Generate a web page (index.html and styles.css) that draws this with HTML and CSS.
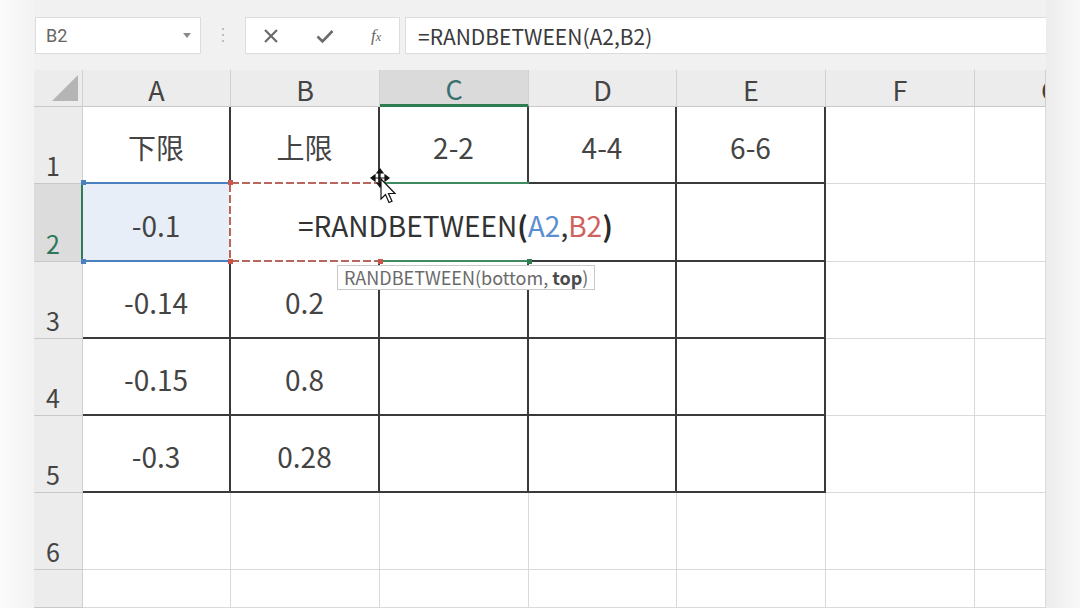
FILE: index.html
```html
<!DOCTYPE html>
<html lang="zh-CN">
<head>
    <meta charset="UTF-8">
    <title>RANDBETWEEN</title>
    <link rel="stylesheet" href="styles.css">
</head>
<body>
    <div class="screen">
        <div class="side side-left"></div>

        <div class="excel">
            <!-- name box + formula bar -->
            <div class="toolbar">
                <div class="namebox">
                    <span>B2</span>
                    <svg class="caret" width="8" height="5" viewBox="0 0 8 5"><path d="M0 0h8L4 5z" fill="#8a8a8a"/></svg>
                </div>
                <div class="grip"><i></i><i></i><i></i></div>
                <div class="fxbox">
                    <svg width="16" height="16" viewBox="0 0 16 16"><path d="M2 2l12 12M14 2L2 14" stroke="#6b6b6b" stroke-width="2.2" fill="none"/></svg>
                    <svg width="18" height="16" viewBox="0 0 18 16"><path d="M1.5 8.5l5 5L16.5 3" stroke="#6b6b6b" stroke-width="2.6" fill="none"/></svg>
                    <span class="fx">f<small>x</small></span>
                </div>
                <div class="formula">=RANDBETWEEN(A2,B2)</div>
            </div>

            <div class="sheet">
                <!-- column headers -->
                <div class="corner"><svg width="26" height="26" viewBox="0 0 26 26"><path d="M26 0V26H0z" fill="#b5b5b5"/></svg></div>
                <div class="colhead">A</div>
                <div class="colhead">B</div>
                <div class="colhead sel">C</div>
                <div class="colhead">D</div>
                <div class="colhead">E</div>
                <div class="colhead">F</div>
                <div class="colhead cut">G</div>

                <!-- row 1 -->
                <div class="rowhead">1</div>
                <div class="cell dark">下限</div>
                <div class="cell dark">上限</div>
                <div class="cell dark">2-2</div>
                <div class="cell dark">4-4</div>
                <div class="cell dark">6-6</div>
                <div class="cell"></div>
                <div class="cell"></div>

                <!-- row 2: A2 referenced, formula being typed -->
                <div class="rowhead sel">2</div>
                <div class="cell dark ref-a">
                    -0.1
                    <span class="mark-blue"></span>
                    <span class="handle blue h-tl"></span>
                    <span class="handle blue h-bl"></span>
                </div>
                <div class="cell dark editing">
                    <span class="edit-text">=RANDBETWEEN<b>(</b><em class="a">A2</em>,<em class="b">B2</em><b>)</b></span>
                    <span class="dash dash-top"></span>
                    <span class="dash dash-left"></span>
                    <span class="dash dash-bottom"></span>
                    <span class="green-line g-top"></span>
                    <span class="green-line g-bottom"></span>
                    <span class="handle red r-tl"></span>
                    <span class="handle red r-bl"></span>
                    <span class="handle red r-br"></span>
                    <span class="handle green g-br"></span>
                    <div class="tip">RANDBETWEEN(bottom, <strong>top</strong>)</div>
                    <svg class="pointer" width="30" height="40" viewBox="0 0 30 40">
                        <path d="M10 1l-3 4h6zM10 19l-3-4h6zM1 10l4-3v6zM19 10l-4-3v6zM10 4v12M4 10h12" stroke="#111" stroke-width="1.2" fill="#111"/>
                        <path d="M11 11v20l4.5-4.5 3.5 8 3-1.3-3.5-7.7h6.5z" fill="#fff" stroke="#111" stroke-width="1.2"/>
                    </svg>
                </div>
                <div class="cell dark"></div>
                <div class="cell"></div>
                <div class="cell"></div>

                <!-- row 3 -->
                <div class="rowhead">3</div>
                <div class="cell dark">-0.14</div>
                <div class="cell dark">0.2</div>
                <div class="cell dark"></div>
                <div class="cell dark"></div>
                <div class="cell dark"></div>
                <div class="cell"></div>
                <div class="cell"></div>

                <!-- row 4 -->
                <div class="rowhead">4</div>
                <div class="cell dark">-0.15</div>
                <div class="cell dark">0.8</div>
                <div class="cell dark"></div>
                <div class="cell dark"></div>
                <div class="cell dark"></div>
                <div class="cell"></div>
                <div class="cell"></div>

                <!-- row 5 -->
                <div class="rowhead">5</div>
                <div class="cell dark">-0.3</div>
                <div class="cell dark">0.28</div>
                <div class="cell dark"></div>
                <div class="cell dark"></div>
                <div class="cell dark"></div>
                <div class="cell"></div>
                <div class="cell"></div>

                <!-- row 6 -->
                <div class="rowhead">6</div>
                <div class="cell"></div>
                <div class="cell"></div>
                <div class="cell"></div>
                <div class="cell"></div>
                <div class="cell"></div>
                <div class="cell"></div>
                <div class="cell"></div>

                <!-- row 7, only its top shows -->
                <div class="rowhead"></div>
                <div class="cell"></div>
                <div class="cell"></div>
                <div class="cell"></div>
                <div class="cell"></div>
                <div class="cell"></div>
                <div class="cell"></div>
                <div class="cell"></div>
            </div>
        </div>

        <div class="side side-right"></div>
    </div>
</body>
</html>
```

FILE: styles.css
```css
body {
    margin: 0;
    font-family: "Noto Sans CJK SC", "Noto Sans", sans-serif;
    color: #333;
    overflow: hidden;
}
.screen {
    display: flex;
    width: 1080px;
    height: 608px;
    overflow: hidden;
}
.side {
    width: 34px;
    flex: none;
}
.side-left {
    background: linear-gradient(90deg, #fbfbfb, #f3f3f3);
}
.side-right {
    background: linear-gradient(90deg, #ececec, #f8f8f8);
}
.excel {
    width: 1012px;
    flex: none;
    overflow: hidden;
    background: #fff;
}

/* ---- formula bar ---- */
.toolbar {
    height: 70px;
    box-sizing: border-box;
    padding-top: 17px;
    background: #f1f1f1;
    display: flex;
    align-items: flex-start;
}
.namebox, .fxbox, .formula {
    height: 37px;
    box-sizing: border-box;
    background: #fff;
    border: 1px solid #dcdcdc;
    display: flex;
    align-items: center;
}
.namebox {
    width: 166px;
    margin-left: 1px;
    padding: 0 9px 0 10px;
    justify-content: space-between;
    font-family: "Roboto", "Liberation Sans", sans-serif;
    font-size: 18px;
    color: #666;
}
.grip {
    width: 44px;
    display: flex;
    flex-direction: column;
    align-items: center;
    gap: 4px;
    padding-top: 11px;
}
.grip i {
    width: 2px;
    height: 2px;
    background: #bdbdbd;
}
.fxbox {
    width: 155px;
    padding: 0 18px 0 17px;
    justify-content: space-between;
}
.fx {
    font-family: "Liberation Serif", serif;
    font-style: italic;
    font-size: 17px;
    color: #666;
}
.fx small {
    font-size: 12px;
}
.formula {
    flex: 1;
    margin-left: 5px;
    border-right: none;
    padding-left: 12px;
    font-size: 21px;
    color: #3a3a3a;
}

/* ---- sheet grid ---- */
.sheet {
    display: grid;
    grid-template-columns: 49px 148px 149px 149px 148px 149px 149px 71px;
    grid-template-rows: 37px 77px 78px 77px 77px 77px 77px 38px;
}
.corner, .colhead, .rowhead {
    background: #ececec;
    box-sizing: border-box;
    border-right: 1px solid #d0d0d0;
    border-bottom: 1px solid #c8c8c8;
    color: #444;
}
.corner {
    display: flex;
    align-items: flex-end;
    justify-content: flex-end;
    padding: 0 4px 5px 0;
}
.colhead {
    display: flex;
    align-items: center;
    justify-content: center;
    font-size: 27px;
    padding-top: 2px;
    white-space: nowrap;
    overflow: hidden;
}
.colhead.cut {
    justify-content: flex-start;
    padding-left: 66px;
}
.colhead.sel {
    background: #dadada;
    border-bottom: 3px solid #2e7d50;
    color: #3b6f6f;
}
.rowhead {
    display: flex;
    align-items: flex-end;
    padding: 0 0 5px 12px;
    font-size: 25px;
    line-height: 1;
}
.rowhead.sel {
    background: #dcdcdc;
    border-right: 2px solid #2f7d58;
    color: #2d7658;
}
.cell {
    box-sizing: border-box;
    border-right: 1px solid #dadada;
    border-bottom: 1px solid #dadada;
    display: flex;
    align-items: center;
    justify-content: center;
    padding-top: 5px;
    font-size: 28px;
    color: #444;
    position: relative;
}
.cell.dark {
    border-right: 2px solid #3a3a3a;
    border-bottom: 2px solid #3a3a3a;
}

/* A2 - first argument, blue reference */
.ref-a {
    background: #e8eef7;
}
.mark-blue {
    position: absolute;
    left: -1px;
    right: -2px;
    top: -2px;
    bottom: -2px;
    border-top: 2px solid #4a7fc0;
    border-bottom: 2px solid #4a7fc0;
}
.handle {
    position: absolute;
    width: 5px;
    height: 5px;
    z-index: 3;
}
.handle.blue { background: #4a7fc0; }
.handle.red { background: #c8564c; }
.handle.green { background: #2e7d50; }
.h-tl { left: -2px; top: -4px; }
.h-bl { left: -2px; bottom: -4px; }

/* B2:D2 - cell being edited */
.editing {
    grid-column: span 3;
    background: #fff;
    z-index: 2;
    justify-content: flex-start;
    padding-left: 67px;
}
.edit-text {
    font-size: 28px;
    color: #333;
    white-space: nowrap;
}
.edit-text b {
    font-weight: 700;
    color: #2a2a2a;
}
.edit-text em {
    font-style: normal;
}
.edit-text .a { color: #5b8ed1; }
.edit-text .b { color: #d0625d; }
.dash {
    position: absolute;
}
.dash-top, .dash-bottom {
    left: 0;
    width: 149px;
    height: 2px;
    background: repeating-linear-gradient(90deg, #b9665c 0 8px, #fff 8px 11px);
}
.dash-top { top: -2px; }
.dash-bottom { bottom: -2px; }
.dash-left {
    left: -2px;
    top: 0;
    width: 2px;
    height: 78px;
    background: repeating-linear-gradient(180deg, #b9665c 0 8px, #fff 8px 11px);
}
.green-line {
    position: absolute;
    left: 150px;
    width: 148px;
    height: 2px;
    background: #3f8a5e;
}
.g-top { top: -2px; }
.g-bottom { bottom: -2px; }
.r-tl { left: -3px; top: -4px; }
.r-bl { left: -3px; bottom: -4px; }
.r-br { left: 147px; bottom: -4px; }
.g-br { left: 296px; bottom: -4px; }
.tip {
    position: absolute;
    left: 106px;
    top: 81px;
    height: 25px;
    box-sizing: border-box;
    padding: 0 6px;
    background: #fff;
    border: 1px solid #c9c9c9;
    font-size: 18px;
    line-height: 23px;
    color: #6a6a6a;
    white-space: nowrap;
}
.tip strong {
    color: #4a4a4a;
}
.pointer {
    position: absolute;
    left: 139px;
    top: -16px;
}
```
